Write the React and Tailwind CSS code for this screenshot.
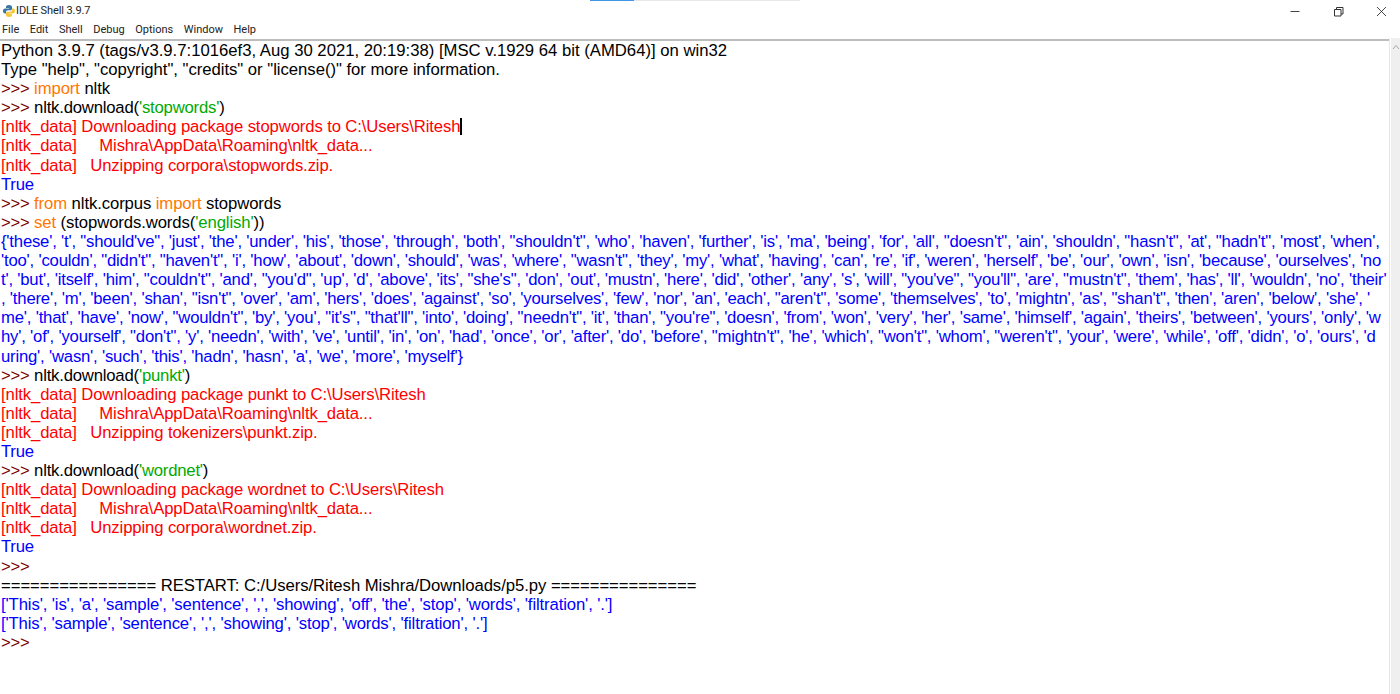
const menus = ["File", "Edit", "Shell", "Debug", "Options", "Window", "Help"];

const setLines = [
  `{'these', 't', "should've", 'just', 'the', 'under', 'his', 'those', 'through', 'both', "shouldn't", 'who', 'haven', 'further', 'is', 'ma', 'being', 'for', 'all', "doesn't", 'ain', 'shouldn', "hasn't", 'at', "hadn't", 'most', 'when',`,
  `'too', 'couldn', "didn't", "haven't", 'i', 'how', 'about', 'down', 'should', 'was', 'where', "wasn't", 'they', 'my', 'what', 'having', 'can', 're', 'if', 'weren', 'herself', 'be', 'our', 'own', 'isn', 'because', 'ourselves', 'no`,
  `t', 'but', 'itself', 'him', "couldn't", 'and', "you'd", 'up', 'd', 'above', 'its', "she's", 'don', 'out', 'mustn', 'here', 'did', 'other', 'any', 's', 'will', "you've", "you'll", 'are', "mustn't", 'them', 'has', 'll', 'wouldn', 'no', 'their'`,
  `, 'there', 'm', 'been', 'shan', "isn't", 'over', 'am', 'hers', 'does', 'against', 'so', 'yourselves', 'few', 'nor', 'an', 'each', "aren't", 'some', 'themselves', 'to', 'mightn', 'as', "shan't", 'then', 'aren', 'below', 'she', '`,
  `me', 'that', 'have', 'now', "wouldn't", 'by', 'you', "it's", "that'll", 'into', 'doing', "needn't", 'it', 'than', "you're", 'doesn', 'from', 'won', 'very', 'her', 'same', 'himself', 'again', 'theirs', 'between', 'yours', 'only', 'w`,
  `hy', 'of', 'yourself', "don't", 'y', 'needn', 'with', 've', 'until', 'in', 'on', 'had', 'once', 'or', 'after', 'do', 'before', "mightn't", 'he', 'which', "won't", 'whom', "weren't", 'your', 'were', 'while', 'off', 'didn', 'o', 'ours', 'd`,
  `uring', 'wasn', 'such', 'this', 'hadn', 'hasn', 'a', 'we', 'more', 'myself'}`,
];

const Line = ({ children, className = "" }) => (
  <div className={`h-[19.1px] leading-[19.1px] whitespace-pre ${className}`}>{children}</div>
);

const Prompt = () => <span className="text-[#7a0000] tracking-[-0.2px]">{">>> "}</span>;
const Black = ({ children }) => <span className="text-black">{children}</span>;
const Orange = ({ children }) => <span className="text-[#ff7700]">{children}</span>;
const Green = ({ children }) => <span className="text-[#00aa00]">{children}</span>;

const Red = ({ children }) => <Line className="text-[#ff0000] tracking-[-0.12px]">{children}</Line>;
const Blue = ({ children, className = "tracking-[-0.2px]" }) => <Line className={`text-[#0000ff] ${className}`}>{children}</Line>;

const Download = ({ name }) => (
  <Line className="tracking-[-0.2px]">
    <Prompt />
    <Black>nltk.download(</Black>
    <Green>'{name}'</Green>
    <Black>)</Black>
  </Line>
);

export default function App() {
  return (
    <div className="h-[694px] w-[1400px] overflow-hidden bg-white flex flex-col font-['Liberation_Sans',sans-serif]">
      <div className="relative h-[22px] flex items-center pl-[2px] font-['Roboto',sans-serif] text-[11px] tracking-[-0.1px] text-[#222]">
        <div className="absolute left-[590px] top-0 h-[1px] w-[44px] bg-[#3f97e6]" />
        <div className="absolute left-[634px] top-0 h-[1px] w-[166px] bg-[#e8e8e8]" />
        <svg width="14" height="14" viewBox="0 0 14 14">
          <path d="M7 1C4.500 1 4 2 4 3v1h3.200v.6H3C1.700 4.600 1 5.600 1 7s.7 2.500 2 2.500h1V8c0-1 .9-1.800 2-1.800h2.500c1 0 1.500-.7 1.500-1.500V3c0-1-1-2-3-2z" fill="#3a76a8" />
          <path d="M7 13c2.500 0 3-1 3-2v-1H6.800v-.6H11c1.300 0 2-1 2-2.400s-.7-2.500-2-2.500h-1V6c0 1-.9 1.800-2 1.800H5.500C4.500 7.800 4 8.500 4 9.300V11c0 1 1 2 3 2z" fill="#f5c83c" />
        </svg>
        <span>IDLE Shell 3.9.7</span>
        <div className="ml-auto flex items-center text-[#333]">
          <svg width="10" height="10" viewBox="0 0 10 10" className="mr-[33px]">
            <path d="M0.500 5.500h9" stroke="#444" strokeWidth="1" />
          </svg>
          <svg width="11" height="11" viewBox="0 0 11 11" className="mr-[32px]">
            <path d="M1.500 3.500h6.500v6.500h-6.500zM3.500 3.500v-2h6.500v6.500h-2" fill="none" stroke="#333" strokeWidth="1" />
          </svg>
          <svg width="11" height="11" viewBox="0 0 11 11" className="mr-[13px]">
            <path d="M1 1l9 9M10 1l-9 9" stroke="#333" strokeWidth="0.900" />
          </svg>
        </div>
      </div>

      <div className="h-[16px] flex items-center pl-[2px] gap-[10.500px] font-['Roboto',sans-serif] text-[11px] text-[#222]">
        {menus.map((m) => (
          <span key={m}>{m}</span>
        ))}
      </div>

      <div className="flex flex-1 min-h-0">
        <div className="flex-1 min-w-0 mt-[1px] border-t-2 border-[#bdbdbd] pl-[1px] text-[16.700px] overflow-hidden">
          <Line className="text-black">Python 3.9.7 (tags/v3.9.7:1016ef3, Aug 30 2021, 20:19:38) [MSC v.1929 64 bit (AMD64)] on win32</Line>
          <Line className="text-black tracking-[-0.03px]">Type "help", "copyright", "credits" or "license()" for more information.</Line>
          <Line className="tracking-[-0.1px]">
            <Prompt />
            <Orange>import</Orange>
            <Black> nltk</Black>
          </Line>
          <Download name="stopwords" />
          <Red>[nltk_data] Downloading package stopwords to C:\Users\Ritesh<span className="inline-block h-[17px] w-[2px] bg-black align-[-3px]" /></Red>
          <Red>[nltk_data]     Mishra\AppData\Roaming\nltk_data...</Red>
          <Red>[nltk_data]   Unzipping corpora\stopwords.zip.</Red>
          <Blue>True</Blue>
          <Line className="tracking-[-0.1px]">
            <Prompt />
            <Orange>from</Orange>
            <Black> nltk.corpus </Black>
            <Orange>import</Orange>
            <Black> stopwords</Black>
          </Line>
          <Line className="tracking-[-0.1px]">
            <Prompt />
            <Orange>set</Orange>
            <Black> (stopwords.words(</Black>
            <Green>'english'</Green>
            <Black>))</Black>
          </Line>
          {setLines.map((l) => (
            <Blue key={l}>{l}</Blue>
          ))}
          <Download name="punkt" />
          <Red>[nltk_data] Downloading package punkt to C:\Users\Ritesh</Red>
          <Red>[nltk_data]     Mishra\AppData\Roaming\nltk_data...</Red>
          <Red>[nltk_data]   Unzipping tokenizers\punkt.zip.</Red>
          <Blue>True</Blue>
          <Download name="wordnet" />
          <Red>[nltk_data] Downloading package wordnet to C:\Users\Ritesh</Red>
          <Red>[nltk_data]     Mishra\AppData\Roaming\nltk_data...</Red>
          <Red>[nltk_data]   Unzipping corpora\wordnet.zip.</Red>
          <Blue>True</Blue>
          <Line><Prompt /></Line>
          <Line className="text-black tracking-[-0.05px]">================ RESTART: C:/Users/Ritesh Mishra/Downloads/p5.py ===============</Line>
          <Blue className="tracking-[-0.12px]">['This', 'is', 'a', 'sample', 'sentence', ',', 'showing', 'off', 'the', 'stop', 'words', 'filtration', '.']</Blue>
          <Blue className="tracking-[-0.15px]">['This', 'sample', 'sentence', ',', 'showing', 'stop', 'words', 'filtration', '.']</Blue>
          <Line><Prompt /></Line>
        </div>
        <div className="w-[11px] border-l border-[#e6e6e6] pl-[1px] flex">
          <div className="flex-1 bg-[#efefef] flex flex-col items-center">
            <svg width="8" height="6" viewBox="0 0 8 6" className="mt-[6px]">
              <path d="M1 5l3-3.500 3 3.500" fill="none" stroke="#a6a6a6" strokeWidth="1" />
            </svg>
          </div>
        </div>
      </div>
    </div>
  );
}
